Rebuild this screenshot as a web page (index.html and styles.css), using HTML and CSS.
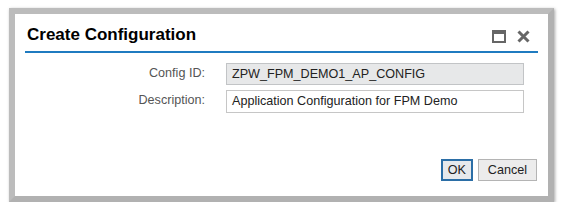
FILE: index.html
```html
<!DOCTYPE html>
<html lang="en">
<head>
    <meta charset="UTF-8">
    <title>Create Configuration</title>
    <link rel="stylesheet" href="styles.css">
</head>
<body>
    <div class="dialog">
        <div class="dialog-header">
            <span class="title">Create Configuration</span>
            <div class="header-icons">
                <svg class="icon" viewBox="0 0 14 13" width="14" height="13">
                    <path d="M1 1.5H13V12H1Z" fill="none" stroke="#666" stroke-width="2"/>
                    <rect x="0" y="0" width="14" height="4" fill="#666"/>
                </svg>
                <svg class="icon" viewBox="0 0 13 13" width="13" height="13">
                    <path d="M1.5 1.5L11.5 11.5M11.5 1.5L1.5 11.5" stroke="#666" stroke-width="3"/>
                </svg>
            </div>
        </div>

        <div class="form">
            <label class="label">Config ID:</label>
            <div class="field readonly">ZPW_FPM_DEMO1_AP_CONFIG</div>
            <label class="label">Description:</label>
            <div class="field">Application Configuration for FPM Demo</div>
        </div>

        <div class="dialog-footer">
            <button class="btn btn-primary">OK</button>
            <button class="btn">Cancel</button>
        </div>
    </div>
</body>
</html>
```

FILE: styles.css
```css
* {
    margin: 0;
    padding: 0;
    box-sizing: border-box;
    font-family: "Liberation Sans", Arial, sans-serif;
}

body {
    background: #fff;
    padding: 8px 0 0 9px;
}

.dialog {
    width: 545px;
    height: 194px;
    background: #fff;
    border: 6px solid #b1b1b1;
    border-top-color: #bcbcbc;
    border-left-color: #bcbcbc;
    box-shadow: 1px 1px 3px rgba(0, 0, 0, 0.35);
    display: flex;
    flex-direction: column;
}

.dialog-header {
    display: flex;
    align-items: center;
    justify-content: space-between;
    margin: 0 10px;
    padding: 11px 8px 6px 2px;
    border-bottom: 2px solid #1f7bc0;
}

.title {
    font-size: 17px;
    line-height: 20px;
    font-weight: bold;
    color: #000;
}

.header-icons {
    display: flex;
    gap: 11px;
    margin-top: 2px;
}

.icon {
    display: block;
}

.form {
    display: grid;
    grid-template-columns: 180px 298px;
    column-gap: 21px;
    row-gap: 5px;
    margin: 10px 0 0 10px;
}

.label {
    text-align: right;
    font-size: 12.6px;
    color: #555;
    line-height: 20px;
}

.field {
    height: 23px;
    border: 1px solid #c6c6c6;
    padding: 2px 5px 0;
    font-size: 12.6px;
    line-height: 17px;
    color: #222;
    background: #fff;
}

.field.readonly {
    height: 22px;
    background: #e7e8e9;
    border-color: #c2c4c6;
}

.dialog-footer {
    margin-top: auto;
    display: flex;
    justify-content: flex-end;
    gap: 5px;
    padding: 0 11px 15px 0;
}

.btn {
    height: 22px;
    padding: 0 9px;
    font-size: 12.6px;
    color: #222;
    background: #ececec;
    border: 1px solid #b4b4b4;
}

.btn-primary {
    width: 32px;
    padding: 0;
    border: 2px solid #2b6ea6;
    background: #e6e9ec;
}
```
